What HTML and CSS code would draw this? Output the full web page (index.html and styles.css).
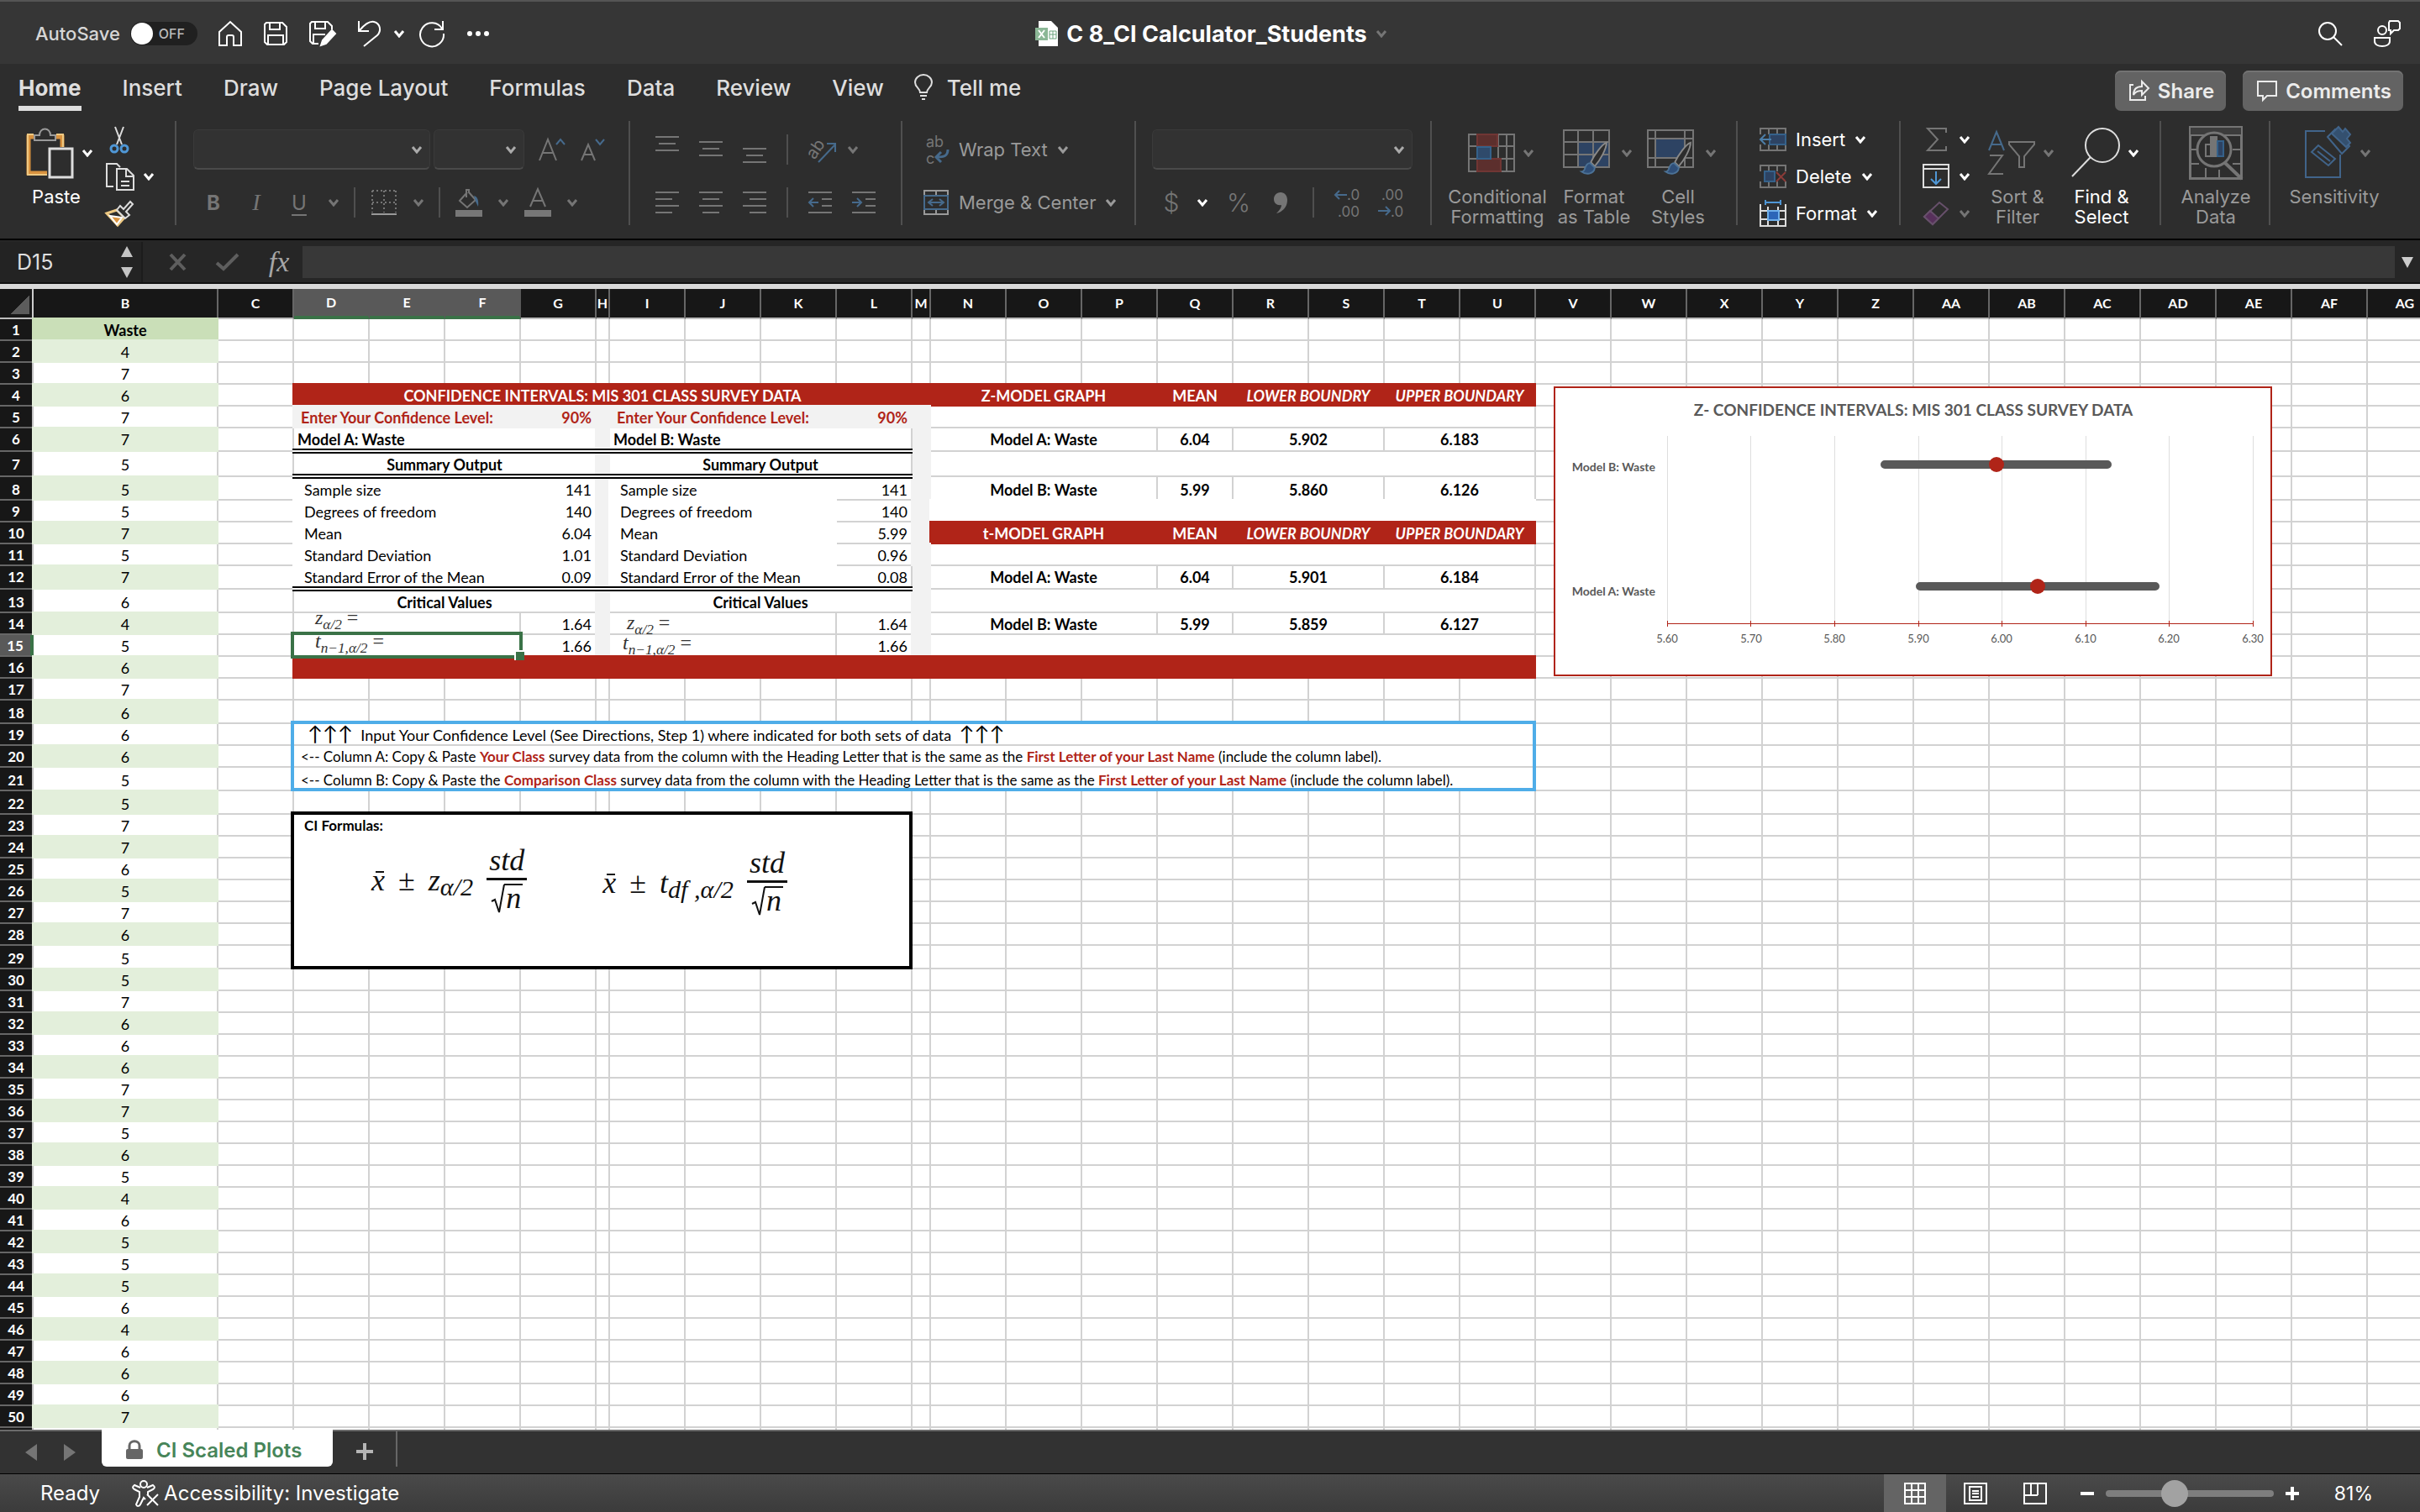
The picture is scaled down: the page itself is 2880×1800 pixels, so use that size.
FILE: index.html
```html
<!DOCTYPE html>
<html lang="en">
<head>
<meta charset="utf-8">
<title>C 8_CI Calculator_Students</title>
<link rel="stylesheet" href="styles.css">
</head>
<body>
<svg class="defs" aria-hidden="true">
  <symbol id="chev" viewBox="0 0 14 10"><path d="M2 2l5 6 5-6" fill="none" stroke="currentColor" stroke-width="3"/></symbol>
  <symbol id="brush" viewBox="0 0 36 44">
    <path d="M34 2C28 4 18 18 14 27l5 5C26 24 34 10 34 2z" fill="#2d2d2d" stroke="#8a8a8a" stroke-width="2"/>
    <path d="M13 28c-5 0-6 5-7 8-1 2-2 3-4 3 5 4 16 4 17-5z" fill="#2f4f79" stroke="#4c7296" stroke-width="2"/>
  </symbol>
</svg>

<header class="titlebar">
  <div class="quick">
    <label class="autosave">AutoSave<input type="checkbox" class="switch" role="switch"><span class="off">OFF</span></label>
    <button aria-label="Home"><svg width="30" height="32" viewBox="0 0 30 32"><path d="M2 14L15 2l13 12v16h-9V20a2 2 0 0 0-2-2h-4a2 2 0 0 0-2 2v10H2z"/></svg></button>
    <button aria-label="Save"><svg width="30" height="30" viewBox="0 0 30 30"><path d="M4 2h19l5 5v18l-3 3H5l-3-3V4zM8 2v8h12V2M6 28V17h18v11"/></svg></button>
    <button aria-label="Save as"><svg width="34" height="32" viewBox="0 0 34 32"><path d="M12 28H5l-3-3V4l2-2h19l5 5v4M8 2v8h12V2M6 28V17h14"/><path d="M15 30l2-6L28 12l4 4-11 12z" fill="#fff"/></svg></button>
    <button aria-label="Undo"><svg width="30" height="34" viewBox="0 0 30 34"><path d="M2 2v12h12M3 13C10 5 15 2 20 3c8 2 9 11 4 16L8 32"/></svg></button>
    <button aria-label="Undo options" class="slim"><svg width="14" height="10"><use href="#chev"/></svg></button>
    <button aria-label="Redo"><svg width="34" height="34" viewBox="0 0 34 34"><path d="M30 2v10H20M29 11A14 14 0 1 0 31 17"/></svg></button>
    <button aria-label="More"><svg width="28" height="8" viewBox="0 0 28 8"><g fill="#fff" stroke="none"><circle cx="4" cy="4" r="3"/><circle cx="14" cy="4" r="3"/><circle cx="24" cy="4" r="3"/></g></svg></button>
  </div>
  <h1 class="doc">
    <svg width="28" height="30" viewBox="0 0 28 30"><path d="M4 0h15l8 8v22H4z" fill="#fff"/><path d="M17 12h8v9h-8zM17 16h8M21 12v9" fill="none" stroke="#6da57f" stroke-width="1"/><path d="M0 8h15v15H0z" fill="#8bb796"/><path d="M4 11l7 9M11 11l-7 9" stroke="#fff" stroke-width="2"/></svg>
    C 8_CI Calculator_Students
    <svg class="dim" width="16" height="10"><use href="#chev"/></svg>
  </h1>
  <div class="right">
    <button aria-label="Search"><svg width="30" height="30" viewBox="0 0 30 30"><circle cx="12" cy="12" r="10"/><path d="M19 19l10 10"/></svg></button>
    <button aria-label="Account"><svg width="34" height="34" viewBox="0 0 34 34"><circle cx="11" cy="13" r="5"/><path d="M2 22h18v4c0 4-4 6-9 6s-9-2-9-6zM20 2h10l2 2v7l-2 2h-5l-4 4v-4h-2V4z"/></svg></button>
  </div>
</header>

<nav class="tabs">
  <a href="#home" class="on">Home</a><a href="#insert">Insert</a><a href="#draw">Draw</a><a href="#layout">Page Layout</a><a href="#formulas">Formulas</a><a href="#data">Data</a><a href="#review">Review</a><a href="#view">View</a>
  <a href="#tell" class="tell"><svg width="24" height="32" viewBox="0 0 24 32"><path d="M8 22c0-5-6-6-6-12a10 9 0 0 1 20 0c0 6-6 7-6 12zM8 26h8M10 30h4" fill="none" stroke="currentColor" stroke-width="2"/></svg>Tell me</a>
  <div class="actions">
    <button><svg width="26" height="26" viewBox="0 0 26 26"><path d="M6 6H2v18h18v-5M6 18c0-7 4-10 10-10V2l8 8-8 8v-5c-5 0-8 1-10 5z" fill="none" stroke="currentColor" stroke-width="2"/></svg>Share</button>
    <button><svg width="26" height="26" viewBox="0 0 26 26"><path d="M2 2h22v17H13l-5 5v-5H2z" fill="none" stroke="currentColor" stroke-width="2"/></svg>Comments</button>
  </div>
</nav>

<section class="ribbon" aria-label="Home ribbon">
  <div class="group g-clip">
    <button class="big lit"><span class="ic"><svg width="56" height="62" viewBox="0 0 56 62"><path d="M10 12H2v43h22M33 12h9v12" fill="none" stroke="#d9923f" stroke-width="5"/><path d="M8 9H1v48h23M35 9h8v15" fill="none" stroke="#eec983" stroke-width="2"/><path d="M9 16v-6h6c0-10 13-10 13 0h6v6z" fill="#2d2d2d" stroke="#9a9a9a" stroke-width="2"/><path d="M27 26h27v34H27z" fill="#2d2d2d" stroke="#ddd" stroke-width="3"/></svg><svg width="14" height="10"><use href="#chev"/></svg></span><span>Paste</span></button>
    <div class="stack lit">
      <button class="cut" aria-label="Cut"><svg width="22" height="34" viewBox="0 0 22 34"><path d="M6 2l8 21M16 2L8 23" stroke="#ddd" stroke-width="2"/><g fill="none" stroke="#4f97d6" stroke-width="3"><circle cx="5" cy="28" r="4"/><circle cx="17" cy="28" r="4"/></g></svg></button>
      <button aria-label="Copy"><svg width="36" height="34" viewBox="0 0 36 34"><path d="M10 29H2V2h12l4 4M14 8h12l8 8v17H14zM25 8v9h9M19 23h10M19 28h10" fill="none" stroke="#ddd" stroke-width="2"/></svg><svg width="14" height="10"><use href="#chev"/></svg></button>
      <button aria-label="Format painter"><svg width="34" height="32" viewBox="0 0 34 32"><path d="M2 16l12-4 9 9-8 9z" fill="none" stroke="#eec983" stroke-width="3"/><path d="M6 19l14 2-6 8z" fill="#d9923f"/><path d="M14 12l4-5 4 4 8-9 3 3-8 9 4 4-5 4z" fill="#2d2d2d" stroke="#ddd" stroke-width="2"/></svg></button>
    </div>
  </div>

  <div class="group rows g-font">
    <div class="row tight">
      <select class="w-font" aria-label="Font"><option></option></select>
      <select class="w-size" aria-label="Font size"><option></option></select>
      <button class="gap" aria-label="Grow font"><svg width="34" height="30" viewBox="0 0 34 30"><path d="M2 28L12 3l10 25M6 19h12" fill="none" stroke="#757575" stroke-width="2"/><path d="M22 9l5-6 5 6" fill="none" stroke="#466a8c" stroke-width="2"/></svg></button>
      <button class="gap" aria-label="Shrink font"><svg width="30" height="30" viewBox="0 0 30 30"><path d="M2 28L10 9l8 19M5 21h10" fill="none" stroke="#757575" stroke-width="2"/><path d="M19 3l5 6 5-6" fill="none" stroke="#466a8c" stroke-width="2"/></svg></button>
    </div>
    <div class="row fonts">
      <button class="b">B</button><button class="i">I</button><button class="u">U</button><svg width="14" height="10"><use href="#chev"/></svg>
      <i class="bar"></i>
      <button aria-label="Borders"><svg width="32" height="32" viewBox="0 0 32 32"><path d="M2 2h28M2 16h28M2 2v26M16 2v26M30 2v26" fill="none" stroke="currentColor" stroke-width="2" stroke-dasharray="2 3"/><path d="M1 30h30" stroke="#999" stroke-width="2"/></svg></button><svg width="14" height="10"><use href="#chev"/></svg>
      <i class="bar"></i>
      <button aria-label="Fill colour"><svg width="32" height="34" viewBox="0 0 32 34"><path d="M14 5L5 15l9 8 10-9-8-9V2h-3v9" fill="none" stroke="currentColor" stroke-width="2"/><path d="M22 9c4 1 6 5 5 13l-3-6z" fill="#466a8c" stroke="none"/><path d="M0 26h32v8H0z" fill="#777" stroke="none"/></svg></button><svg width="14" height="10"><use href="#chev"/></svg>
      <button aria-label="Font colour"><svg width="32" height="34" viewBox="0 0 32 34"><path d="M7 22L16 1l9 21M10 15h12" fill="none" stroke="currentColor" stroke-width="2"/><path d="M0 26h32v8H0z" fill="#777" stroke="none"/></svg></button><svg width="14" height="10"><use href="#chev"/></svg>
    </div>
  </div>

  <div class="group rows g-align">
    <div class="row">
      <button aria-label="Top align"><svg width="28" height="34" viewBox="0 0 28 34"><path d="M0 2h28M4 10h20M0 18h28"/></svg></button>
      <button aria-label="Middle align"><svg width="28" height="34" viewBox="0 0 28 34"><path d="M0 8h28M4 16h20M0 24h28"/></svg></button>
      <button aria-label="Bottom align"><svg width="28" height="34" viewBox="0 0 28 34"><path d="M0 16h28M4 24h20M0 32h28"/></svg></button>
      <i class="bar"></i>
      <button aria-label="Orientation"><svg width="34" height="34" viewBox="0 0 34 34"><text x="-2" y="24" transform="rotate(-55 8 18)" font-size="20" fill="#757575">ab</text><path d="M12 32L32 11M22 10h10v10" stroke="#466a8c"/></svg></button><svg class="near" width="14" height="10"><use href="#chev"/></svg>
    </div>
    <div class="row">
      <button aria-label="Align left"><svg width="28" height="28" viewBox="0 0 28 28"><path d="M0 2h28M0 10h20M0 18h28M0 26h20"/></svg></button>
      <button aria-label="Centre"><svg width="28" height="28" viewBox="0 0 28 28"><path d="M0 2h28M4 10h20M0 18h28M4 26h20"/></svg></button>
      <button aria-label="Align right"><svg width="28" height="28" viewBox="0 0 28 28"><path d="M0 2h28M8 10h20M0 18h28M8 26h20"/></svg></button>
      <i class="bar"></i>
      <button aria-label="Decrease indent"><svg width="28" height="28" viewBox="0 0 28 28"><path d="M0 2h28M16 10h12M16 18h12M0 26h28"/><path d="M12 14H1M6 9l-5 5 5 5" stroke="#466a8c"/></svg></button>
      <button aria-label="Increase indent"><svg width="28" height="28" viewBox="0 0 28 28"><path d="M0 2h28M16 10h12M16 18h12M0 26h28"/><path d="M0 14h11M6 9l5 5-5 5" stroke="#466a8c"/></svg></button>
    </div>
  </div>

  <div class="group rows g-wrap">
    <div class="row"><button class="txt"><svg width="32" height="38" viewBox="0 0 32 38"><text x="4" y="16" font-size="18">ab</text><text x="4" y="36" font-size="18">c</text><path d="M30 19c0 8-5 9-13 9M22 22l-6 6 6 6" stroke="#466a8c" stroke-width="3"/></svg>Wrap Text<svg width="14" height="10"><use href="#chev"/></svg></button></div>
    <div class="row"><button class="txt"><svg width="32" height="32" viewBox="0 0 32 32"><path d="M2 8V2h28v6M16 2v6M2 24v6h28v-6M16 24v6"/><path d="M2 8h28v16H2zM8 16h16M12 12l-5 4 5 4M20 12l5 4-5 4" stroke="#466a8c"/></svg>Merge &amp; Center<svg width="14" height="10"><use href="#chev"/></svg></button></div>
  </div>

  <div class="group rows g-num">
    <div class="row"><select class="w-num" aria-label="Number format"><option></option></select></div>
    <div class="row nums">
      <button class="sym">$</button><svg class="lit close" width="14" height="10"><use href="#chev"/></svg>
      <button class="sym">%</button>
      <button class="comma" aria-label="Comma style"><svg width="18" height="28" viewBox="0 0 18 28"><path d="M9 2c5 0 8 4 8 9 0 8-5 14-13 16 4-4 6-7 6-10-5 1-9-2-9-7 0-4 3-8 8-8z" fill="#757575" stroke="none"/></svg></button>
      <i class="bar"></i>
      <button aria-label="Increase decimal"><svg width="32" height="38" viewBox="0 0 32 38"><text x="15" y="16" font-size="17">.0</text><text x="4" y="36" font-size="17">.00</text><path d="M15 10H1M6 5l-5 5 5 5" stroke="#466a8c"/></svg></button>
      <button aria-label="Decrease decimal"><svg width="32" height="38" viewBox="0 0 32 38"><text x="4" y="16" font-size="17">.00</text><text x="15" y="36" font-size="17">.0</text><path d="M0 29h14M9 24l5 5-5 5" stroke="#466a8c"/></svg></button>
    </div>
  </div>

  <div class="group g-styles">
    <button class="big wide"><span class="ic"><svg width="56" height="46" viewBox="0 0 56 46"><path d="M1 1h54v44H1zM1 15h54M1 30h54M11 1v44M36 1v44M46 1v44"/><path d="M11 1h24v14H11zM11 30h28v15H11z" fill="#5c2f2d" stroke="#703634"/><path d="M11 16h16v14H11z" fill="#2f4a6b" stroke="#35618a"/></svg><svg width="14" height="10"><use href="#chev"/></svg></span><span>Conditional<br>Formatting</span></button>
    <button class="big"><span class="ic"><svg width="60" height="56" viewBox="0 0 60 56"><path d="M18 16h37v30H18z" fill="#2d4363" stroke="none"/><path d="M1 1h54v44H1zM1 15h54M1 30h54M18 1v44M36 1v44"/><use href="#brush" x="14" y="14" width="46" height="41"/></svg><svg width="14" height="10"><use href="#chev"/></svg></span><span>Format<br>as Table</span></button>
    <button class="big thin"><span class="ic"><svg width="60" height="56" viewBox="0 0 60 56"><path d="M10 12h35v22H10z" fill="#2d4363" stroke="none"/><path d="M1 1h54v44H1zM1 11h54M1 34h54M10 1v44M45 1v44"/><use href="#brush" x="14" y="14" width="46" height="41"/></svg><svg width="14" height="10"><use href="#chev"/></svg></span><span>Cell<br>Styles</span></button>
  </div>

  <div class="group cells g-cells">
    <button class="txt lit"><svg width="32" height="28" viewBox="0 0 32 28"><g stroke="#757575"><path d="M1 8V1h30v7M1 20v7h30v-7M11 1v7M21 1v7M11 20v7M21 20v7"/></g><path d="M12 8h19v12H12z" fill="#2d4363" stroke="#35618a"/><path d="M14 14H1M7 8l-6 6 6 6" stroke="#4c7ea8"/></svg>Insert<svg width="14" height="10"><use href="#chev"/></svg></button>
    <button class="txt lit"><svg width="32" height="28" viewBox="0 0 32 28"><g stroke="#757575"><path d="M1 8V1h30v7M1 20v7h30v-7M11 1v7M21 1v7M11 20v7M21 20v7"/></g><path d="M6 8h12v12H6z" fill="#2d4363" stroke="#35618a"/><path d="M20 9l11 11M31 9L20 20" stroke="#8b3b38"/></svg>Delete<svg width="14" height="10"><use href="#chev"/></svg></button>
    <button class="txt lit"><svg width="32" height="32" viewBox="0 0 32 32"><path d="M7 3h18M7 0v6M25 0v6" stroke="#4f97d6"/><path d="M1 5v26h30V5M1 13h30M1 23h30M10 8v23M22 8v23" stroke="#ddd"/><path d="M10 13h13v11H10z" fill="#2c66b8" stroke="#6fb0ea"/></svg>Format<svg width="14" height="10"><use href="#chev"/></svg></button>
  </div>

  <div class="group g-edit">
    <div class="stack lit">
      <button aria-label="AutoSum"><svg width="32" height="30" viewBox="0 0 32 30"><path d="M28 7V2H6l12 13L6 28h22v-5" fill="none" stroke="#757575" stroke-width="2"/></svg><svg width="14" height="10"><use href="#chev"/></svg></button>
      <button aria-label="Fill"><svg width="32" height="30" viewBox="0 0 32 30"><path d="M1 1h30v27H1zM1 6h30" fill="none" stroke="#ddd" stroke-width="2"/><path d="M16 9v14M10 18l6 6 6-6" fill="none" stroke="#4f97d6" stroke-width="2"/></svg><svg width="14" height="10"><use href="#chev"/></svg></button>
      <button aria-label="Clear"><svg width="32" height="30" viewBox="0 0 32 30"><path d="M2 19L20 2l10 8-18 18z" fill="none" stroke="#67506b" stroke-width="2"/><path d="M2 19l7-7 10 9-7 7z" fill="#57305b" stroke="#67506b"/></svg><svg class="dim" width="14" height="10"><use href="#chev"/></svg></button>
    </div>
    <button class="big"><span class="ic"><svg width="56" height="54" viewBox="0 0 56 54"><path d="M1 24L10 2l9 22M4 17h12" stroke="#466a8c"/><path d="M2 30h15L1 52h17M25 14h30v3L43 31v13h-6V31L25 17z"/></svg><svg width="14" height="10"><use href="#chev"/></svg></span><span>Sort &amp;<br>Filter</span></button>
    <button class="big lit"><span class="ic"><svg width="58" height="60" viewBox="0 0 58 60"><circle cx="37" cy="21" r="20" stroke="#ddd"/><path d="M23 35L1 58" stroke="#ddd"/></svg><svg width="14" height="10"><use href="#chev"/></svg></span><span>Find &amp;<br>Select</span></button>
  </div>

  <div class="group g-one">
    <button class="big"><span class="ic"><svg width="64" height="64" viewBox="0 0 64 64"><path d="M1 1h62v62H1z" fill="#3c3c3c"/><path d="M2 11h60v51H2z" fill="#2d2d2d"/><path d="M1 11h62M1 28h10M52 28h11M1 45h11M52 45h11M20 50v13M36 52v11"/><circle cx="30" cy="28" r="20" fill="#2d2d2d" stroke-width="3"/><path d="M43 44l20 19" stroke-width="4"/><path d="M20 22h6v14h-6z"/><path d="M26 13h7v23h-7z" fill="#757575"/><path d="M34 18h7v18h-7z" fill="#2d4363" stroke="#35618a"/></svg></span><span>Analyze<br>Data</span></button>
  </div>
  <div class="group g-last">
    <button class="big wide"><span class="ic"><svg width="56" height="62" viewBox="0 0 56 62"><g fill="none" stroke="#41648a" stroke-width="2"><path d="M24 5H1v55h41V33"/><path d="M8 30l8-8 20 16-8 8zM15 29l15 12M27 12l9-9 17 20-9 9z"/><path d="M32 8l8-8 5 6 3-4 6 7-4 5 4 5-5 5z" fill="#34506f"/></g></svg><svg width="14" height="10"><use href="#chev"/></svg></span><span>Sensitivity</span></button>
  </div>
</section>

<section class="formula">
  <div class="namebox"><input type="text" value="D15" aria-label="Name box"><svg width="14" height="38" viewBox="0 0 14 38"><path d="M7 0l7 13H0zM7 38L0 25h14z" fill="#c4c4c4"/></svg></div>
  <button class="cancel" aria-label="Cancel"><svg width="24" height="22" viewBox="0 0 24 22"><path d="M3 2l17 18M20 2L3 20" stroke="#5e5e5e" stroke-width="4"/></svg></button>
  <button class="enter" aria-label="Enter"><svg width="30" height="22" viewBox="0 0 30 22"><path d="M2 12l8 7L27 2" fill="none" stroke="#5e5e5e" stroke-width="4"/></svg></button>
  <button class="fx" aria-label="Insert function">fx</button>
  <input type="text" class="fin" aria-label="Formula">
  <button class="more" aria-label="Expand formula bar"><svg width="14" height="13" viewBox="0 0 14 13"><path d="M0 0h14L7 13z" fill="#ccc"/></svg></button>
</section>

<main class="sheet">
  <table class="grid" id="grid"></table>

  <div class="note"></div>
  <div class="sel"><i></i></div>
  <span class="eq eq-z1"><i>z<sub>α/2</sub></i> =</span>
  <span class="eq eq-t1"><i>t<sub>n−1,α/2</sub></i> =</span>
  <span class="eq eq-z2"><i>z<sub>α/2</sub></i> =</span>
  <span class="eq eq-t2"><i>t<sub>n−1,α/2</sub></i> =</span>

  <section class="ci">
    <h2>CI Formulas:</h2>
    <div class="maths">
      <div class="math"><i class="bar-x">x</i><span>±</span><span><i>z<sub>α/2</sub></i></span><span class="frac"><i>std</i><span class="root"><svg width="16" height="36" viewBox="0 0 16 36"><path d="M1 21l4-2 5 15L16 1" fill="none" stroke="#111" stroke-width="2"/></svg><i>n</i></span></span></div>
      <div class="math second"><i class="bar-x">x</i><span>±</span><span><i>t<sub>df ,α/2</sub></i></span><span class="frac"><i>std</i><span class="root"><svg width="16" height="36" viewBox="0 0 16 36"><path d="M1 21l4-2 5 15L16 1" fill="none" stroke="#111" stroke-width="2"/></svg><i>n</i></span></span></div>
    </div>
  </section>

  <figure class="chart">
    <svg width="851" height="341" viewBox="2 2 851 341" role="img" aria-label="Z confidence intervals">
      <path d="M135.500 59V282M234.500 59V282M334.500 59V282M434.500 59V282M533.500 59V282M633.500 59V282M732.500 59V282M832.500 59V282" stroke="#dedede"/>
      <path d="M135 282.500H833M135.500 279v7M234.500 279v7M334.500 279v7M434.500 279v7M533.500 279v7M633.500 279v7M732.500 279v7M832.500 279v7" stroke="#b02418"/>
      <g stroke="#595959" stroke-width="10" stroke-linecap="round"><path d="M394 93H659M436 238H716"/></g>
      <g fill="#b02418"><circle cx="527" cy="93" r="9"/><circle cx="576" cy="238" r="9"/></g>
      <g fill="#595959" font-weight="700">
        <text x="428" y="35" text-anchor="middle" font-size="19">Z- CONFIDENCE INTERVALS: MIS 301 CLASS SURVEY DATA</text>
        <g font-size="14" text-anchor="end"><text x="121" y="101">Model B: Waste</text><text x="121" y="249">Model A: Waste</text></g>
      </g>
      <g fill="#595959" font-size="13" text-anchor="middle"><text x="135" y="305">5.60</text><text x="235" y="305">5.70</text><text x="334" y="305">5.80</text><text x="434" y="305">5.90</text><text x="533" y="305">6.00</text><text x="633" y="305">6.10</text><text x="732" y="305">6.20</text><text x="832" y="305">6.30</text></g>
    </svg>
  </figure>
</main>

<nav class="sheets">
  <button aria-label="Previous sheet"><svg width="14" height="20" viewBox="0 0 14 20"><path d="M14 0v20L0 10z" fill="#757575"/></svg></button>
  <button aria-label="Next sheet"><svg width="14" height="20" viewBox="0 0 14 20"><path d="M0 0v20l14-10z" fill="#757575"/></svg></button>
  <a href="#sheet" class="tab"><svg width="20" height="24" viewBox="0 0 20 24"><path d="M4 12V7c0-7 12-7 12 0v5" fill="none" stroke="#666" stroke-width="3"/><rect x="0" y="11" width="20" height="12" rx="2" fill="#666"/></svg>CI Scaled Plots</a>
  <button class="add" aria-label="Add sheet"><svg width="20" height="20" viewBox="0 0 20 20"><path d="M10 0v20M0 10h20" stroke="#b5b5b5" stroke-width="4"/></svg></button>
</nav>

<footer class="status">
  <span>Ready</span>
  <button class="acc"><svg width="32" height="32" viewBox="0 0 32 32"><g fill="none" stroke="#fff" stroke-width="2"><circle cx="14" cy="5" r="4"/><path d="M10 9L3 6C0 8 1 10 3 11l6 3v6L5 29c1 3 4 2 5 0l4-8 2 2M18 9l7-3c3 2 2 4 0 5l-6 3v4M18 17l13 13M31 17L18 30"/></g></svg>Accessibility: Investigate</button>
  <div class="views">
    <button class="on" aria-label="Normal view"><svg width="28" height="28" viewBox="0 0 28 28"><path d="M2 2h24v24H2zM10 2v24M18 2v24M2 10h24M2 18h24"/></svg></button>
    <button aria-label="Page layout view"><svg width="28" height="28" viewBox="0 0 28 28"><path d="M1 2h26v24H1zM7 6h14v16H7zM10 11h8M10 14h8M10 18h8"/></svg></button>
    <button aria-label="Page break view"><svg width="28" height="28" viewBox="0 0 28 28"><path d="M1 2h26v24H1zM9 2v14M17 2v14M1 16h16"/></svg></button>
  </div>
  <div class="zoom">
    <button aria-label="Zoom out"><svg width="16" height="16" viewBox="0 0 16 16"><path d="M0 8h16" stroke-width="4"/></svg></button>
    <input type="range" min="10" max="190" value="81" aria-label="Zoom">
    <button aria-label="Zoom in"><svg width="16" height="16" viewBox="0 0 16 16"><path d="M0 8h16M8 0v16" stroke-width="4"/></svg></button>
    <output>81%</output>
  </div>
</footer>
<script src="grid.js"></script>
</body>
</html>
```
FILE: styles.css
```css
* { box-sizing: border-box; }
body {
  margin: 0; height: 100vh; display: flex; flex-direction: column; overflow: hidden;
  background: #2d2d2d; color: #dedede; font-family: Inter, "Liberation Sans", sans-serif; font-size: 22px;
}
button, input, select { font: inherit; color: inherit; background: none; border: 0; padding: 0; margin: 0; }
button { display: flex; align-items: center; justify-content: center; flex: none; }
a { color: inherit; text-decoration: none; }
svg { flex: none; display: block; overflow: visible; }
.defs { position: absolute; width: 0; height: 0; }

/* title bar */
.titlebar { flex: none; height: 76px; display: grid; grid-template-columns: 1fr auto 1fr; align-items: center; background: #363636; border-top: 2px solid #555; padding: 2px 22px 0 42px; color: #fff; }
.titlebar button svg { fill: none; stroke: #fff; stroke-width: 2; }
.quick { display: flex; align-items: center; gap: 24px; }
.quick .slim { margin: 0 -9px 0 -11px; }
.autosave { position: relative; display: flex; align-items: center; gap: 12px; color: #d6d6d6; font-weight: 500; }
.switch { appearance: none; width: 80px; height: 28px; border-radius: 14px; background: #202020; }
.switch::before { content: ""; display: block; width: 26px; height: 26px; margin: 1px; border-radius: 50%; background: #fff; }
.off { position: absolute; right: 15px; font-size: 16px; color: #bbb; }
.doc { margin: 0 16px 0 0; display: flex; align-items: center; gap: 9px; font-size: 27px; font-weight: 700; }
.dim { color: #757575; }
.right { display: flex; justify-content: flex-end; gap: 36px; }

/* ribbon tabs */
.tabs { flex: none; height: 66px; display: flex; align-items: flex-start; gap: 49px; padding: 8px 20px 0 22px; font-size: 26px; font-weight: 500; }
.tabs > a { height: 48px; display: flex; align-items: center; padding-bottom: 8px; }
.tabs .on { font-weight: 700; box-shadow: inset 0 -6px 0 #dedede; }
.tabs .tell { gap: 16px; margin-left: -14px; }
.actions { margin-left: auto; display: flex; gap: 20px; font-size: 24px; font-weight: 600; }
.actions button { height: 48px; gap: 9px; padding: 0 14px 0 16px; border-radius: 7px; background: #636363; box-shadow: inset 0 2px 0 #737373; color: #ececec; }

/* ribbon groups */
.ribbon { flex: none; height: 144px; display: flex; border-bottom: 2px solid #000; color: #757575; }
.ribbon svg { fill: none; stroke: currentColor; stroke-width: 2; }
.ribbon svg text { stroke: none; fill: #757575; font-family: Inter, sans-serif; }
.group { flex: none; display: flex; height: 128px; position: relative; }
.group:not(:last-child)::after { content: ""; position: absolute; right: 0; top: 2px; bottom: 2px; width: 2px; background: #4f4f4f; }
.lit, .big.lit, .txt.lit { color: #fff; }
.rows { flex-direction: column; }
.row { display: flex; align-items: center; gap: 24px; height: 72px; }
.row + .row { height: 54px; }
.row.tight { gap: 4px; }
.row .gap { margin-left: 12px; }
.row .near { margin-left: -12px; }
.bar { flex: none; width: 2px; height: 36px; background: #4f4f4f; }
.big { flex-direction: column; justify-content: flex-start; width: 110px; line-height: 24px; color: #9a9a9a; }
.big.wide { width: 120px; }
.big.thin { width: 90px; }
.big .ic { height: 80px; display: flex; align-items: center; gap: 9px; padding-left: 8px; color: #757575; }
.big.lit .ic { color: #fff; }
.stack { display: flex; flex-direction: column; padding-top: 2px; }
.stack button { height: 44px; gap: 11px; justify-content: flex-start; }
.stack .cut { padding-left: 6px; }
.txt { gap: 11px; color: #9a9a9a; }
.g-clip { width: 210px; padding-left: 12px; }
.g-clip .stack { padding-left: 3px; }
.g-clip .stack button { gap: 9px; }
.g-font { width: 540px; padding-left: 20px; }
.g-align { width: 324px; padding-left: 30px; }
.g-wrap { width: 278px; padding-left: 24px; }
.g-num { width: 352px; padding-left: 19px; }
.g-styles { width: 364px; padding-left: 18px; }
.g-cells { width: 194px; padding: 2px 0 0 26px; flex-direction: column; align-items: flex-start; }
.g-cells button { height: 44px; }
.g-edit { width: 310px; padding-left: 26px; }
.g-edit .stack { margin-right: 6px; }
.g-edit .big { width: 100px; }
.g-one { width: 130px; padding-left: 10px; }
.g-one .ic { padding-left: 0; }
.g-last { padding-left: 16px; }
.ribbon select { appearance: none; height: 48px; border-radius: 6px; border: 1px solid #3a3a3a; border-bottom: 2px solid #4a4a4a; background: #323232 url("data:image/svg+xml,%3Csvg xmlns='http://www.w3.org/2000/svg' width='14' height='10'%3E%3Cpath d='M2 2l5 6 5-6' fill='none' stroke='%23aaa' stroke-width='3'/%3E%3C/svg%3E") no-repeat right 8px center; }
.w-font { width: 282px; }
.w-size { width: 108px; }
.w-num { width: 310px; }
.fonts { gap: 17px; padding-left: 7px; }
.fonts button { min-width: 34px; font-size: 24px; }
.fonts .b { font-weight: 700; }
.fonts .i { font-family: "Liberation Serif", serif; font-style: italic; font-size: 28px; }
.fonts .u { text-decoration: underline; text-underline-offset: 5px; }
.nums { gap: 20px; padding-left: 7px; }
.nums .close { margin-left: -6px; }
.nums .comma { min-width: 28px; }
.nums .bar { margin: 0 4px; }
.sym { font-size: 30px; font-weight: 300; width: 32px; }

/* formula bar */
.formula { flex: none; height: 58px; display: flex; align-items: center; background: #262626; border-bottom: 6px solid #d8d8d8; box-shadow: inset 0 -2px 0 #111; }
.namebox { width: 170px; height: 48px; display: flex; align-items: center; justify-content: space-between; padding: 0 10px 0 20px; border-right: 2px solid #1c1c1c; background: #232323; }
.namebox input { width: 90px; font-size: 25px; }
.formula .cancel { width: 84px; }
.formula .enter { width: 34px; margin-right: 16px; }
.formula .fx { font-family: "Liberation Serif", serif; font-style: italic; font-size: 34px; color: #a6a6a6; width: 56px; }
.fin { flex: 1; height: 38px; background: #383838; }
.formula .more { width: 30px; }

/* worksheet */
.sheet { flex: 1; min-height: 0; position: relative; overflow: hidden; background: #fff; color: #000; font-family: Lato, "Liberation Sans", sans-serif; font-size: 18px; line-height: 22px; }
.grid { table-layout: fixed; width: 1px; border-collapse: separate; border-spacing: 0; }
.c-head { width: 40px; } .c-b { width: 220px; } .c-std { width: 90px; } .c-h { width: 16px; } .c-m { width: 22px; }
.grid th, .grid td { padding: 0; white-space: nowrap; }
.grid thead th { height: 36px; background: #171717; color: #fff; font-size: 16px; border-right: 2px solid #666; border-bottom: 2px solid #bdbdbd; }
.grid thead .on { background: #595959; border-right-color: #595959; border-bottom: 4px solid #3a7247; }
.grid thead .corner { border-right-color: #ccc; background: linear-gradient(135deg, transparent 50%, #5c5c5c 50%) no-repeat 12px 8px / 23px 22px #171717; }
.grid tbody th { background: #171717; color: #fff; font-size: 17px; vertical-align: bottom; border-right: 2px solid #c4c4c4; border-bottom: 2px solid #666; }
.grid tbody th.on { background: #595959; border-right: 4px solid #3a7247; }
.grid td { height: 26px; border: solid #d2d2d2; border-width: 0 2px 2px 0; vertical-align: bottom; overflow: visible; }
.grid .t28 > * { height: 28px; }
.grid .t30 > * { height: 30px; }
.grid .raised > * { padding-bottom: 2px; }
.grid .fill { border-color: var(--c); background: var(--c); box-shadow: -2px -2px 0 var(--c), 0 -2px 0 var(--c), -2px 0 0 var(--c); }
.dark { --c: #cadfb8; } .pale { --c: #e3efdb; } .red { --c: #b02418; color: #fff; } .grey { --c: #f2f2f2; color: #b02418; } .white { --c: #fff; }
.c { text-align: center; }
.grid .r { text-align: right; padding-right: 4px; }
.grid .l1 { padding-left: 4px; } .grid .l2 { padding-left: 8px; } .grid .l3 { padding-left: 12px; } .grid .l4 { padding-left: 16px; }
.bold { font-weight: 700; } .it { font-style: italic; }
.sm { font-size: 17px; }
.sm b { color: #b02418; }
.up { font-size: 24px; line-height: 0; }
.grid .dbl { position: relative; }
.grid .dbl::after { content: ""; position: absolute; z-index: 1; left: -2px; right: -2px; bottom: -4px; height: 2px; background: #fff; border: solid #000; border-width: 2px 0; }

/* objects floating over the cells */
.note { position: absolute; left: 346px; top: 514px; width: 1482px; height: 84px; border: 4px solid #4fade8; }
.sel { position: absolute; z-index: 2; left: 346px; top: 408px; width: 276px; height: 32px; border: 4px solid #3a7247; }
.sel i { position: absolute; right: -6px; bottom: -6px; width: 12px; height: 12px; background: #3a7247; border: solid #fff; border-width: 2px 0 0 2px; }
.eq { position: absolute; z-index: 3; font: 24px/24px "Liberation Serif", serif; color: #333; }
.eq sub { font-size: 72%; vertical-align: -6px; line-height: 0; }
.math sub { font-size: 84%; vertical-align: -6px; line-height: 0; }
.eq-z1 { left: 375px; top: 379px; }
.eq-t1 { left: 375px; top: 407px; }
.eq-z2 { left: 746px; top: 385px; }
.eq-t2 { left: 741px; top: 409px; }
.ci { position: absolute; left: 346px; top: 622px; width: 740px; height: 188px; border: 4px solid #000; background: #fff; padding: 2px 12px; }
.ci h2 { margin: 0; font-size: 17px; line-height: 22px; }
.maths { display: flex; align-items: flex-start; gap: 90px; padding: 13px 0 0 80px; }
.math { display: flex; align-items: center; gap: 16px; font: 36px/40px "Liberation Serif", serif; color: #111; }
.math.second { padding-top: 3px; }
.bar-x { position: relative; }
.bar-x::after { content: ""; position: absolute; left: 5px; right: 1px; top: 9px; height: 2px; background: #111; }
.frac { display: flex; flex-direction: column; align-items: center; }
.frac > i { border-bottom: 3px solid #111; padding: 0 3px 4px; line-height: 34px; }
.root { display: flex; align-items: flex-start; padding-top: 4px; }
.root i { border-top: 2px solid #111; line-height: 30px; padding: 0 2px; }
.chart { position: absolute; left: 1849px; top: 116px; margin: 0; border: 2px solid #b02418; background: #fff; }

/* sheet tabs */
.sheets { flex: none; height: 52px; display: flex; align-items: flex-start; background: #323232; border-top: 2px solid #6b6b6b; padding-left: 30px; }
.sheets > button { height: 50px; margin-right: 32px; }
.sheets .tab { height: 44px; margin-top: -2px; display: flex; align-items: center; gap: 16px; padding: 4px 37px 0 29px; margin-left: -1px; background: #fff; color: #478559; border-radius: 0 0 6px 6px; font-size: 24px; font-weight: 600; }
.sheets .add { width: 77px; height: 42px; margin: 0; padding-top: 6px; border-right: 2px solid #666; }

/* status bar */
.status { flex: none; height: 46px; display: flex; align-items: center; background: linear-gradient(#4a4a4a, #3b3b3b); border-top: 1px solid #000; padding-left: 48px; font-size: 24px; color: #fff; }
.acc { gap: 6px; margin-left: 38px; }
.views { margin-left: auto; display: flex; align-self: stretch; }
.views button { width: 71px; }
.views .on { width: 74px; background: #646464; }
.views svg, .zoom svg { fill: none; stroke: #fff; stroke-width: 2; }
.zoom { display: flex; align-items: center; gap: 14px; padding: 0 56px 0 18px; font-size: 23px; }
.zoom input { appearance: none; width: 200px; height: 8px; border-radius: 4px; background: #7e7e7e; }
.zoom input::-webkit-slider-thumb { appearance: none; width: 32px; height: 32px; border-radius: 50%; background: #a2a2a2; }
.zoom output { margin-left: 28px; }
```
FILE: grid.js
```js
// Builds the worksheet: column letters, row numbers and the cell contents.
const letters = "BCDEFGHIJKLMNOPQRSTUVWXYZ".split("").concat(["AA", "AB", "AC", "AD", "AE", "AF", "AG"]);
const waste = [4,7,6,7,7,5,5,5,7,5,7,6,4,5,6,7,6,6,6,5,5,7,7,6,5,7,6,5,5,7,6,6,6,7,7,5,6,5,4,6,5,5,5,6,4,6,6,6,7];
const heights = { 6: "t28 raised", 7: "t30 raised", 8: "t28", 12: "t28 raised", 13: "t28", 18: "t28", 21: "t28", 22: "t28", 29: "t28" };

const head = (name) => [["N", 3, name, "fill red c bold"], ["Q", 1, "MEAN", "fill red c bold"], ["R", 2, "LOWER BOUNDRY", "fill red c bold it"], ["T", 2, "UPPER BOUNDARY", "fill red c bold it"]];
const model = (name, mean, low, high) => [["N", 3, name, "c bold"], ["Q", 1, mean, "c bold"], ["R", 2, low, "c bold"], ["T", 2, high, "c bold"]];
const stat = (name, a, b, x = "") => [["D", 3, name, "fill white l3 " + x], ["G", 1, a, "fill white r " + x], ["H", 1, "", "fill grey " + x], ["I", 3, name, "fill white l3 " + x], ["L", 1, b, "r " + x], ["M", 1, "", "fill grey"]];
const title = (name, x) => [["D", 4, name, "c bold " + x], ["H", 1, "", "fill grey " + x], ["I", 4, name, "c bold " + x], ["M", 1, "", "fill grey"]];
const blank = ["N", 8, "", ""];

const cells = {
  4: [["D", 9, "CONFIDENCE INTERVALS: MIS 301 CLASS SURVEY DATA", "fill red c bold"], ["M", 1, "", "fill red"], ...head("Z-MODEL GRAPH")],
  5: [["D", 3, "Enter Your Confidence Level:", "fill grey bold l2"], ["G", 1, "90%", "fill grey bold r"], ["H", 1, "", "fill grey"], ["I", 3, "Enter Your Confidence Level:", "fill grey bold l2"], ["L", 1, "90%", "fill grey bold r"], ["M", 1, "", "fill grey"], blank],
  6: [["D", 4, "Model A: Waste", "bold l1 dbl"], ["H", 1, "", "fill grey dbl"], ["I", 4, "Model B: Waste", "bold l1 dbl"], ["M", 1, "", "fill grey"], ...model("Model A: Waste", "6.04", "5.902", "6.183")],
  7: [...title("Summary Output", "dbl"), blank],
  8: [...stat("Sample size", "141", "141"), ...model("Model B: Waste", "5.99", "5.860", "6.126")],
  9: [...stat("Degrees of freedom", "140", "140"), ["N", 8, "", "fill white"]],
  10: [...stat("Mean", "6.04", "5.99"), ...head("t-MODEL GRAPH")],
  11: [...stat("Standard Deviation", "1.01", "0.96"), blank],
  12: [...stat("Standard Error of the Mean", "0.09", "0.08", "dbl"), ...model("Model A: Waste", "6.04", "5.901", "6.184")],
  13: [...title("Critical Values", ""), blank],
  14: [["D", 3, "", ""], ["G", 1, "1.64", "r"], ["H", 1, "", "fill grey"], ["I", 3, "", ""], ["L", 1, "1.64", "r"], ["M", 1, "", "fill grey"], ...model("Model B: Waste", "5.99", "5.859", "6.127")],
  15: [["D", 3, "", ""], ["G", 1, "1.66", "r"], ["H", 1, "", "fill grey"], ["I", 3, "", ""], ["L", 1, "1.66", "r"], ["M", 1, "", "fill grey"], blank],
  16: [["D", 18, "", "fill red"]],
  19: [["D", 18, '<span class="up">↑↑↑</span>&nbsp; Input Your Confidence Level (See Directions, Step 1) where indicated for both sets of data&nbsp; <span class="up">↑↑↑</span>', "l4"]],
  20: [["D", 18, "&lt;-- Column A: Copy &amp; Paste <b>Your Class</b> survey data from the column with the Heading Letter that is the same as the <b>First Letter of your Last Name</b> (include the column label).", "sm l2"]],
  21: [["D", 18, "&lt;-- Column B: Copy &amp; Paste the <b>Comparison Class</b> survey data from the column with the Heading Letter that is the same as the <b>First Letter of your Last Name</b> (include the column label).", "sm l2"]],
};

const lastRow = 50;
const colClass = { B: "c-b", H: "c-h", M: "c-m" };
let html = '<colgroup><col class="c-head">' + letters.map((l) => `<col class="${colClass[l] || "c-std"}">`).join("") + "</colgroup>";
html += '<thead><tr><th class="corner"></th>' + letters.map((l) => `<th scope="col"${"DEF".includes(l) ? ' class="on"' : ""}>${l}</th>`).join("") + "</tr></thead><tbody>";
for (let row = 1; row <= lastRow + 1; row++) {
  html += `<tr class="${heights[row] || ""}"><th scope="row"${row === 15 ? ' class="on"' : ""}>${row <= lastRow ? row : ""}</th>`;
  if (row === 1) html += '<td class="fill dark c bold">Waste</td>';
  else html += `<td class="c${row % 2 ? "" : " fill pale"}">${waste[row - 2] ?? ""}</td>`;
  const content = cells[row] || [];
  for (let i = 1; i < letters.length; ) {
    const cell = content.find((entry) => entry[0] === letters[i]);
    if (cell) {
      html += `<td colspan="${cell[1]}" class="${cell[3]}">${cell[2]}</td>`;
      i += cell[1];
    } else {
      html += "<td></td>";
      i++;
    }
  }
  html += "</tr>";
}
document.getElementById("grid").innerHTML = html + "</tbody>";
```
